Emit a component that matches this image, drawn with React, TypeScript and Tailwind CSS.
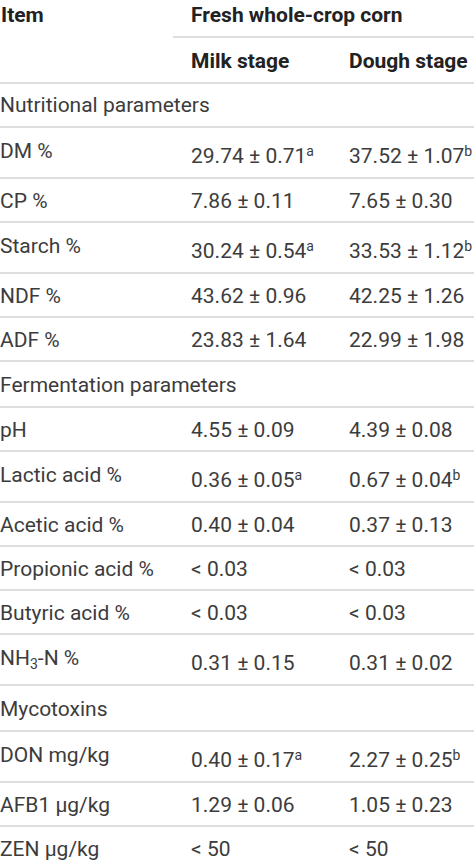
type Row =
  | { kind: "group"; label: string }
  | { kind: "data"; label: React.ReactNode; milk: React.ReactNode; dough: React.ReactNode; tall?: boolean };

const sup = (s: string) => <sup className="text-[14px]">{s}</sup>;

const rows: Row[] = [
  { kind: "group", label: "Nutritional parameters" },
  { kind: "data", tall: true, label: "DM %", milk: <>29.74 ± 0.71{sup("a")}</>, dough: <>37.52 ± 1.07{sup("b")}</> },
  { kind: "data", label: "CP %", milk: "7.86 ± 0.11", dough: "7.65 ± 0.30" },
  { kind: "data", tall: true, label: "Starch %", milk: <>30.24 ± 0.54{sup("a")}</>, dough: <>33.53 ± 1.12{sup("b")}</> },
  { kind: "data", label: "NDF %", milk: "43.62 ± 0.96", dough: "42.25 ± 1.26" },
  { kind: "data", label: "ADF %", milk: "23.83 ± 1.64", dough: "22.99 ± 1.98" },
  { kind: "group", label: "Fermentation parameters" },
  { kind: "data", label: "pH", milk: "4.55 ± 0.09", dough: "4.39 ± 0.08" },
  { kind: "data", tall: true, label: "Lactic acid %", milk: <>0.36 ± 0.05{sup("a")}</>, dough: <>0.67 ± 0.04{sup("b")}</> },
  { kind: "data", label: "Acetic acid %", milk: "0.40 ± 0.04", dough: "0.37 ± 0.13" },
  { kind: "data", label: "Propionic acid %", milk: "< 0.03", dough: "< 0.03" },
  { kind: "data", label: "Butyric acid %", milk: "< 0.03", dough: "< 0.03" },
  {
    kind: "data",
    tall: true,
    label: (
      <>
        NH<sub className="text-[14px]">3</sub>-N %
      </>
    ),
    milk: "0.31 ± 0.15",
    dough: "0.31 ± 0.02",
  },
  { kind: "group", label: "Mycotoxins" },
  { kind: "data", tall: true, label: "DON mg/kg", milk: <>0.40 ± 0.17{sup("a")}</>, dough: <>2.27 ± 0.25{sup("b")}</> },
  { kind: "data", label: "AFB1 μg/kg", milk: "1.29 ± 0.06", dough: "1.05 ± 0.23" },
  { kind: "data", label: "ZEN μg/kg", milk: "< 50", dough: "< 50" },
];

export default function App() {
  return (
    <div className="h-[863px] w-[474px] overflow-hidden bg-white font-['Roboto',sans-serif] text-[21px] leading-[28px] text-[#3c3c3c]">
      <table className="-mt-[9px] w-[500px] table-fixed border-collapse">
        <colgroup>
          <col className="w-[173px]" />
          <col className="w-[158px]" />
          <col />
        </colgroup>
        <thead className="font-medium text-[#222]">
          <tr>
            <th rowSpan={2} className="border-b-2 border-[#dedede] pt-[10px] pb-[7px] pl-[1px] text-left align-top">
              Item
            </th>
            <th colSpan={2} className="border-b-2 border-[#dedede] pt-[10px] pb-[7px] pl-[18px] text-left align-top">
              Fresh whole-crop corn
            </th>
          </tr>
          <tr>
            <th className="border-b-2 border-[#dedede] pt-[9px] pb-[7px] pl-[18px] text-left align-top">Milk stage</th>
            <th className="border-b-2 border-[#dedede] pt-[9px] pb-[7px] pl-[18px] text-left align-top">Dough stage</th>
          </tr>
        </thead>
        <tbody>
          {rows.map((r, i) =>
            r.kind === "group" ? (
              <tr key={i}>
                <td
                  colSpan={3}
                  className={`border-b-2 border-[#dedede] pb-[7px] pl-0 align-top ${i === 0 ? "pt-[7px]" : "pt-[9px]"}`}
                >
                  {r.label}
                </td>
              </tr>
            ) : (
              <tr key={i}>
                <td className={`border-b-2 border-[#dedede] pl-0 align-top ${r.tall ? "pt-[9px] pb-[12px]" : "pt-[8px] pb-[6px]"}`}>
                  {r.label}
                </td>
                <td className={`border-b-2 border-[#dedede] pl-[18px] align-top ${r.tall ? "pt-[14px] pb-[7px]" : "pt-[8px] pb-[6px]"}`}>
                  {r.milk}
                </td>
                <td className={`border-b-2 border-[#dedede] pl-[18px] align-top ${r.tall ? "pt-[14px] pb-[7px]" : "pt-[8px] pb-[6px]"}`}>
                  {r.dough}
                </td>
              </tr>
            )
          )}
        </tbody>
      </table>
    </div>
  );
}
